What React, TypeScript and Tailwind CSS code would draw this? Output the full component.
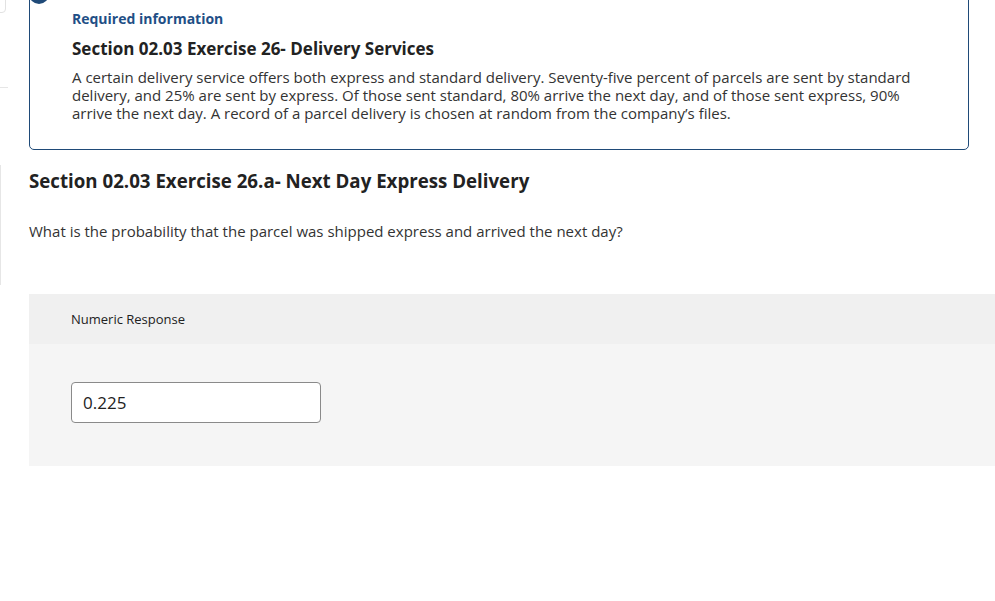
import React from "react";

export default function App() {
  return (
    <div className="relative w-[995px] h-[601px] overflow-hidden bg-white" style={{ fontFamily: "'Open Sans', Lato, sans-serif" }}>
      {/* left edge fragments */}
      <div className="absolute left-[-10px] top-[-10px] w-[16px] h-[23px] border border-[#e2e2e2] rounded-[4px]" />
      <div className="absolute left-0 top-[87px] w-[8px] h-px bg-[#e6e6e6]" />
      <div className="absolute left-0 top-[165px] w-px h-[120px] bg-[#e6e6e6]" />

      <div className="flex flex-col pl-[29px]">
        {/* info box */}
        <div className="relative mt-[-10px] mr-[26px] border border-[#1f4a78] rounded-b-[5px] pl-[42px] pr-4 pt-[18px] pb-[27px] flex flex-col">
          <div className="absolute left-[-1px] top-[-7px] w-[20px] h-[20px] rounded-full bg-[#1f4a78]" />
          <div className="text-[14px] font-bold text-[#1f4f86] leading-[20px]">Required information</div>
          <div className="mt-[10px] text-[17px] font-bold text-[#222] leading-[20px]">Section 02.03 Exercise 26- Delivery Services</div>
          <p className="mt-[9px] text-[15px] text-[#333] leading-[18px]">
            A certain delivery service offers both express and standard delivery. Seventy-five percent of parcels are sent by standard
            <br />
            delivery, and 25% are sent by express. Of those sent standard, 80% arrive the next day, and of those sent express, 90%
            <br />
            arrive the next day. A record of a parcel delivery is chosen at random from the company’s files.
          </p>
        </div>

        <h2 className="mt-[19px] mr-[26px] text-[18.7px] font-bold text-[#222] leading-[24px]">Section 02.03 Exercise 26.a- Next Day Express Delivery</h2>
        <p className="mt-[28px] mr-[26px] text-[15px] text-[#333] leading-[20px]">What is the probability that the parcel was shipped express and arrived the next day?</p>

        <div className="mt-[53px] flex flex-col">
          <div className="h-[50px] bg-[#f0f0f0] flex items-center pl-[42px] pt-[2px] text-[13px] text-[#222]">Numeric Response</div>
          <div className="h-[122px] bg-[#f5f5f5] pl-[42px] pt-[38px] flex items-start">
            <div className="w-[250px] h-[41px] bg-white border border-[#8a8a8a] rounded-[4px] flex items-center pl-[11px] text-[17px] text-[#222]">0.225</div>
          </div>
        </div>
      </div>
    </div>
  );
}
